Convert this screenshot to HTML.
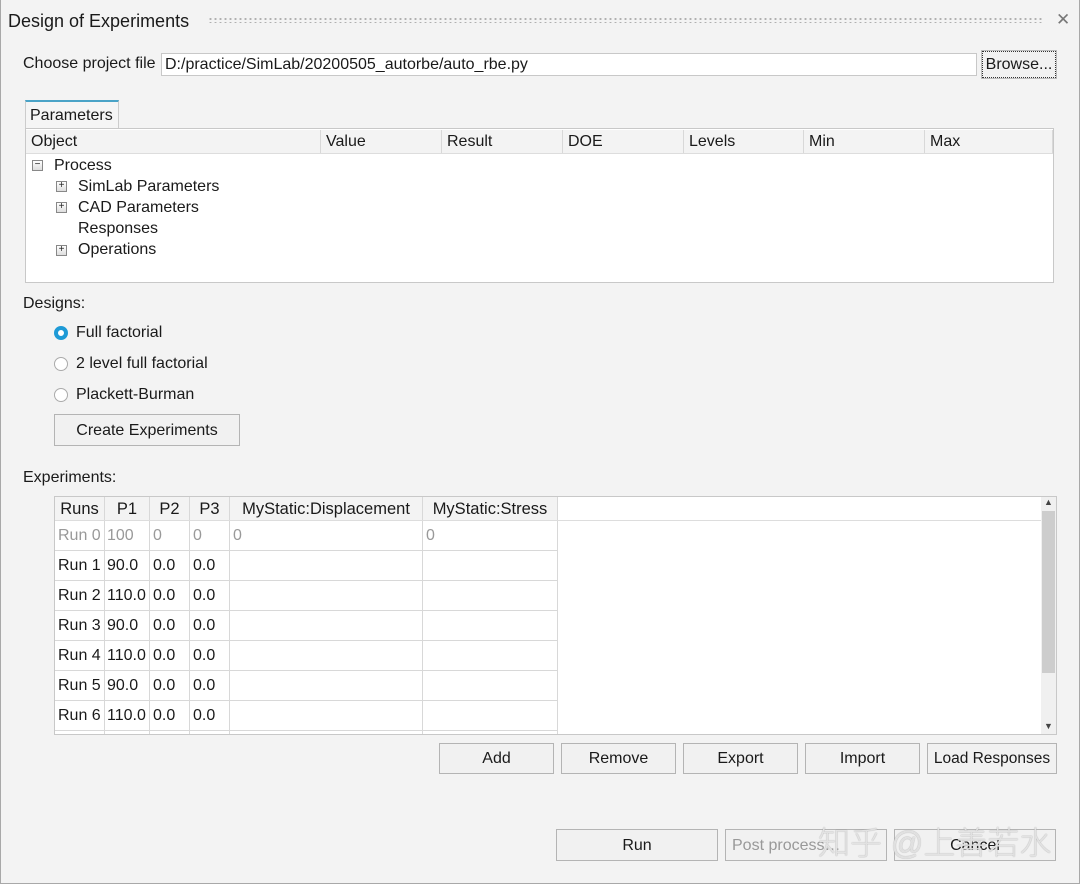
<!DOCTYPE html>
<html><head><meta charset="utf-8"><style>
*{box-sizing:border-box;margin:0;padding:0}
body{width:1080px;height:884px;background:#f3f3f3;font-family:"Liberation Sans","Noto Sans CJK SC",sans-serif;font-size:16px;color:#1a1a1a;position:relative;overflow:hidden}
.a{position:absolute;white-space:nowrap}
.frame{position:absolute;left:0;top:0;width:1080px;height:884px;border:1px solid #a8a8a8;border-top:none}
.btn{position:absolute;background:#f1f1f1;border:1px solid #b4b4b4;text-align:center;font-size:16px}
.cell{position:absolute;border-right:1px solid #d8d8d8;border-bottom:1px solid #d8d8d8;padding-left:3px;line-height:30px;overflow:hidden}
.hd{position:absolute;border-right:1px solid #d8d8d8;line-height:24px;text-align:center;background:#f3f3f3;font-size:16.5px}
.th{position:absolute;border-right:1px solid #d8d8d8;line-height:24px;padding-left:5px;background:#f3f3f3}
.pm{position:absolute;width:11px;height:11px;border:1px solid #888;background:linear-gradient(#fff,#ddd);font-size:10px;line-height:8px;text-align:center;color:#222}
.radio{position:absolute;width:14px;height:14px;border-radius:50%;border:1px solid #aaa;background:#fff}
</style></head><body>
<div class="frame"></div>
<div class="a" style="left:8px;top:11px;font-size:18px">Design of Experiments</div>
<div class="a" style="left:208px;top:17px;width:835px;height:6px;background-image:radial-gradient(circle,#b0b0b0 1px,transparent 1.2px);background-size:5px 4px"></div>
<div class="a" style="left:1056px;top:10px;font-size:17px;color:#777">✕</div>

<div class="a" style="left:23px;top:55px">Choose project file</div>
<div class="a" style="left:161px;top:53px;width:816px;height:23px;background:#fff;border:1px solid #c8c8c8;padding-left:3px;line-height:22px">D:/practice/SimLab/20200505_autorbe/auto_rbe.py</div>
<div class="btn" style="left:982px;top:51px;width:74px;height:27px;line-height:25px;border:1px dotted #333;outline:1px solid #bbb">Browse...</div>

<div class="a" style="left:25px;top:100px;width:94px;height:29px;border:1px solid #ccc;border-top:2px solid #4aa3c7;border-bottom:none;background:#f5f5f5;padding-left:4px;line-height:27px">Parameters</div>
<div class="a" style="left:25px;top:128px;width:1029px;height:155px;background:#fff;border:1px solid #c8c8c8"></div>
<div class="th" style="left:26px;top:130px;width:295px">Object</div>
<div class="th" style="left:321px;top:130px;width:121px">Value</div>
<div class="th" style="left:442px;top:130px;width:121px">Result</div>
<div class="th" style="left:563px;top:130px;width:121px">DOE</div>
<div class="th" style="left:684px;top:130px;width:120px">Levels</div>
<div class="th" style="left:804px;top:130px;width:121px">Min</div>
<div class="th" style="left:925px;top:130px;width:128px">Max</div>
<div class="a" style="left:26px;top:153px;width:1027px;height:1px;background:#ddd"></div>
<div class="pm" style="left:32px;top:160px">−</div><div class="a" style="left:54px;top:157px">Process</div>
<div class="pm" style="left:56px;top:181px">+</div><div class="a" style="left:78px;top:178px">SimLab Parameters</div>
<div class="pm" style="left:56px;top:202px">+</div><div class="a" style="left:78px;top:199px">CAD Parameters</div>
<div class="a" style="left:78px;top:220px">Responses</div>
<div class="pm" style="left:56px;top:245px">+</div><div class="a" style="left:78px;top:241px">Operations</div>

<div class="a" style="left:23px;top:295px">Designs:</div>
<div class="radio" style="left:54px;top:326px;border:4px solid #1e9ad6"></div><div class="a" style="left:76px;top:324px">Full factorial</div>
<div class="radio" style="left:54px;top:357px"></div><div class="a" style="left:76px;top:355px">2 level full factorial</div>
<div class="radio" style="left:54px;top:388px"></div><div class="a" style="left:76px;top:386px">Plackett-Burman</div>
<div class="btn" style="left:54px;top:414px;width:186px;height:32px;line-height:31px">Create Experiments</div>

<div class="a" style="left:23px;top:469px">Experiments:</div>
<div class="a" style="left:54px;top:496px;width:1003px;height:239px;background:#fff;border:1px solid #c8c8c8;overflow:hidden">
<div class="hd" style="left:0;top:0;width:50px">Runs</div>
<div class="hd" style="left:50px;top:0;width:45px">P1</div>
<div class="hd" style="left:95px;top:0;width:40px">P2</div>
<div class="hd" style="left:135px;top:0;width:40px">P3</div>
<div class="hd" style="left:175px;top:0;width:193px">MyStatic:Displacement</div>
<div class="hd" style="left:368px;top:0;width:135px">MyStatic:Stress</div>
<div class="hd" style="left:503px;top:0;width:483px;border:none"></div>
<div style="position:absolute;left:0;top:23px;width:986px;height:1px;background:#ddd"></div>
<div id="rows"></div>
<div style="position:absolute;left:986px;top:0;width:15px;height:237px;background:#f0f0f0"></div>
<div style="position:absolute;left:987px;top:14px;width:13px;height:162px;background:#cdcdcd"></div>
<div style="position:absolute;left:989px;top:0;font-size:9px;color:#444">▲</div>
<div style="position:absolute;left:989px;top:224px;font-size:9px;color:#444">▼</div>
</div>

<div class="btn" style="left:439px;top:743px;width:115px;height:31px;line-height:30px">Add</div>
<div class="btn" style="left:561px;top:743px;width:115px;height:31px;line-height:30px">Remove</div>
<div class="btn" style="left:683px;top:743px;width:115px;height:31px;line-height:30px">Export</div>
<div class="btn" style="left:805px;top:743px;width:115px;height:31px;line-height:30px">Import</div>
<div class="btn" style="left:927px;top:743px;width:130px;height:31px;line-height:30px;font-size:15.5px">Load Responses</div>

<div class="btn" style="left:556px;top:829px;width:162px;height:32px;line-height:31px">Run</div>
<div class="btn" style="left:725px;top:829px;width:162px;height:32px;line-height:31px;color:#999;text-align:left;padding-left:6px">Post process…</div>
<div class="btn" style="left:894px;top:829px;width:162px;height:32px;line-height:31px">Cancel</div>
<div class="a" style="left:818px;top:818px;font-size:32px;font-weight:300;color:rgba(245,245,245,0.8);text-shadow:0 0 1px #888">知乎 @上善若水</div>

<script>
var d=[["Run 0","100","0","0","0","0",1],["Run 1","90.0","0.0","0.0","",""],["Run 2","110.0","0.0","0.0","",""],["Run 3","90.0","0.0","0.0","",""],["Run 4","110.0","0.0","0.0","",""],["Run 5","90.0","0.0","0.0","",""],["Run 6","110.0","0.0","0.0","",""],["","","","","",""]];
var L=[0,50,95,135,175,368],W=[50,45,40,40,193,135],h="";
d.forEach(function(r,i){var t=24+i*30;for(var c=0;c<6;c++){h+='<div class="cell" style="left:'+L[c]+'px;top:'+t+'px;width:'+W[c]+'px;height:30px;'+(c==1?'padding-left:2px;':'')+(r[6]?'color:#999':'')+'">'+r[c]+'</div>';}});
document.getElementById("rows").innerHTML=h;
</script>
</body></html>
